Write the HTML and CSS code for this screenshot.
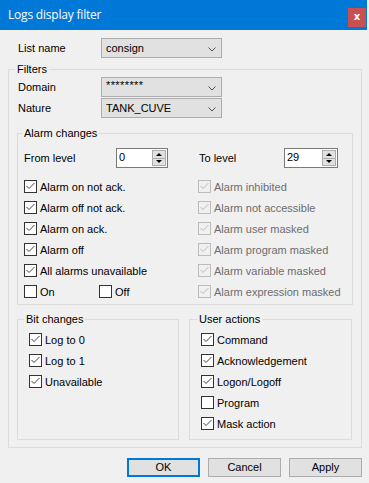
FILE: index.html
```html
<!DOCTYPE html>
<html>
<head>
<meta charset="utf-8">
<title>Logs display filter</title>
<link rel="stylesheet" href="styles.css">
</head>
<body>
<div class="window">
  <div class="titlebar">
    <span class="title">Logs display filter</span>
    <span class="close">x</span>
  </div>

  <div class="row top-row">
    <span class="label">List name</span>
    <div class="combo"><span>consign</span><svg class="chev" width="8" height="5" viewBox="0 0 8 5"><polyline points="0.5,0.5 4,4 7.5,0.5"/></svg></div>
  </div>

  <fieldset class="group filters">
    <legend>Filters</legend>
    <div class="row">
      <span class="label">Domain</span>
      <div class="combo"><span class="stars">********</span><svg class="chev" width="8" height="5" viewBox="0 0 8 5"><polyline points="0.5,0.5 4,4 7.5,0.5"/></svg></div>
    </div>
    <div class="row second">
      <span class="label">Nature</span>
      <div class="combo"><span>TANK_CUVE</span><svg class="chev" width="8" height="5" viewBox="0 0 8 5"><polyline points="0.5,0.5 4,4 7.5,0.5"/></svg></div>
    </div>

    <fieldset class="group alarms">
      <legend>Alarm changes</legend>
      <div class="levels">
        <div class="level">
          <span class="lvl-label from">From level</span>
          <div class="spin narrow"><span class="spin-val">0</span><div class="spin-btns"><span class="sb"><i class="up"></i></span><span class="sb"><i class="down"></i></span></div></div>
        </div>
        <div class="level">
          <span class="lvl-label to">To level</span>
          <div class="spin wide"><span class="spin-val">29</span><div class="spin-btns"><span class="sb"><i class="up"></i></span><span class="sb"><i class="down"></i></span></div></div>
        </div>
      </div>
      <div class="alarm-grid">
        <label class="chk"><span class="cb"><svg viewBox="0 0 11 11"><polyline points="1.5,5 4,7.5 9.5,2"/></svg></span>Alarm on not ack.</label>
        <label class="chk dis"><span class="cb"><svg viewBox="0 0 11 11"><polyline points="1.5,5 4,7.5 9.5,2"/></svg></span>Alarm inhibited</label>
        <label class="chk"><span class="cb"><svg viewBox="0 0 11 11"><polyline points="1.5,5 4,7.5 9.5,2"/></svg></span>Alarm off not ack.</label>
        <label class="chk dis"><span class="cb"><svg viewBox="0 0 11 11"><polyline points="1.5,5 4,7.5 9.5,2"/></svg></span>Alarm not accessible</label>
        <label class="chk"><span class="cb"><svg viewBox="0 0 11 11"><polyline points="1.5,5 4,7.5 9.5,2"/></svg></span>Alarm on ack.</label>
        <label class="chk dis"><span class="cb"><svg viewBox="0 0 11 11"><polyline points="1.5,5 4,7.5 9.5,2"/></svg></span>Alarm user masked</label>
        <label class="chk"><span class="cb"><svg viewBox="0 0 11 11"><polyline points="1.5,5 4,7.5 9.5,2"/></svg></span>Alarm off</label>
        <label class="chk dis"><span class="cb"><svg viewBox="0 0 11 11"><polyline points="1.5,5 4,7.5 9.5,2"/></svg></span>Alarm program masked</label>
        <label class="chk"><span class="cb"><svg viewBox="0 0 11 11"><polyline points="1.5,5 4,7.5 9.5,2"/></svg></span>All alarms unavailable</label>
        <label class="chk dis"><span class="cb"><svg viewBox="0 0 11 11"><polyline points="1.5,5 4,7.5 9.5,2"/></svg></span>Alarm variable masked</label>
        <div class="onoff">
          <label class="chk on"><span class="cb"></span>On</label>
          <label class="chk"><span class="cb"></span>Off</label>
        </div>
        <label class="chk dis"><span class="cb"><svg viewBox="0 0 11 11"><polyline points="1.5,5 4,7.5 9.5,2"/></svg></span>Alarm expression masked</label>
      </div>
    </fieldset>

    <div class="bottom-groups">
      <fieldset class="group bits">
        <legend>Bit changes</legend>
        <label class="chk"><span class="cb"><svg viewBox="0 0 11 11"><polyline points="1.5,5 4,7.5 9.5,2"/></svg></span>Log to 0</label>
        <label class="chk"><span class="cb"><svg viewBox="0 0 11 11"><polyline points="1.5,5 4,7.5 9.5,2"/></svg></span>Log to 1</label>
        <label class="chk"><span class="cb"><svg viewBox="0 0 11 11"><polyline points="1.5,5 4,7.5 9.5,2"/></svg></span>Unavailable</label>
      </fieldset>
      <fieldset class="group users">
        <legend>User actions</legend>
        <label class="chk"><span class="cb"><svg viewBox="0 0 11 11"><polyline points="1.5,5 4,7.5 9.5,2"/></svg></span>Command</label>
        <label class="chk"><span class="cb"><svg viewBox="0 0 11 11"><polyline points="1.5,5 4,7.5 9.5,2"/></svg></span>Acknowledgement</label>
        <label class="chk"><span class="cb"><svg viewBox="0 0 11 11"><polyline points="1.5,5 4,7.5 9.5,2"/></svg></span>Logon/Logoff</label>
        <label class="chk"><span class="cb"></span>Program</label>
        <label class="chk"><span class="cb"><svg viewBox="0 0 11 11"><polyline points="1.5,5 4,7.5 9.5,2"/></svg></span>Mask action</label>
      </fieldset>
    </div>
  </fieldset>

  <div class="buttons">
    <span class="btn default">OK</span>
    <span class="btn">Cancel</span>
    <span class="btn">Apply</span>
  </div>
</div>
</body>
</html>
```

FILE: styles.css
```css
* { box-sizing: border-box; }

body {
  margin: 0;
  background: #f0f0f0;
  font-family: "Liberation Sans", Arial, sans-serif;
  font-size: 11px;
  color: #000;
}

.window {
  width: 369px;
  height: 483px;
  background: #f0f0f0;
  overflow: hidden;
}

.titlebar {
  height: 30px;
  margin-right: 2px;
  background: #0078d7;
  display: flex;
  align-items: flex-start;
}

.title {
  margin: 7px 0 0 8px;
  font-family: "Open Sans", "Noto Sans", sans-serif;
  font-size: 12px;
  line-height: 16px;
  color: #fff;
  letter-spacing: -0.2px;
}

.close {
  margin: 8px 1px 0 auto;
  width: 18px;
  height: 19px;
  background: #c75050;
  color: #fff;
  font-family: "DejaVu Sans", sans-serif;
  font-weight: bold;
  font-size: 10px;
  line-height: 18px;
  text-align: center;
}

.row {
  display: flex;
  align-items: center;
  height: 20px;
}

.row .label {
  width: 84px;
  padding-left: 1px;
}

.top-row {
  margin-top: 8px;
  padding-left: 17px;
}

.row.second { margin-top: 1px; }

.combo {
  width: 121px;
  height: 20px;
  background: #e1e1e1;
  border: 1px solid #adadad;
  display: flex;
  align-items: center;
  justify-content: space-between;
  padding: 0 5px 0 4px;
}

.stars {
  font-size: 11px;
  letter-spacing: 0.4px;
  line-height: 11px;
  margin-top: -3px;
}

.chev {
  margin-top: 2px;
  fill: none;
  stroke: #505050;
  stroke-width: 1;
}

/* group boxes */
.group {
  margin: 0;
  min-width: 0;
  border: 1px solid #dcdcdc;
}

.group legend {
  font-size: 11px;
  line-height: 12px;
  padding: 0 2px;
}

.filters {
  width: 354px;
  margin: 5px 0 0 8px;
  padding: 2px 8px 7px 8px;
}

.filters > legend { margin-left: -2px; }

.alarms {
  margin-top: 9px;
  padding: 9px 6px 2px 6px;
}

.alarms > legend { margin-left: -2px; }

.levels {
  display: grid;
  grid-template-columns: 174px 1fr;
  height: 20px;
}

.level {
  display: flex;
  align-items: center;
}

.lvl-label.from { width: 92px; }
.lvl-label.to { width: 86px; padding-left: 1px; }

.spin {
  height: 20px;
  background: #fff;
  border: 1px solid #7a7a7a;
  display: flex;
  align-items: stretch;
}

.spin.narrow { width: 52px; }
.spin.wide { width: 54px; }

.spin-val {
  flex: 1;
  padding-left: 2px;
  line-height: 17px;
}

.spin-btns {
  width: 14px;
  margin: 1px;
  display: flex;
  flex-direction: column;
}

.sb {
  flex: 1;
  background: #e1e1e1;
  border: 1px solid #adadad;
  display: flex;
  align-items: center;
  justify-content: center;
}

.sb + .sb { border-top: 0; }

.sb i {
  width: 0;
  height: 0;
  border-left: 3px solid transparent;
  border-right: 3px solid transparent;
}

.sb i.up { border-bottom: 3px solid #000; }
.sb i.down { border-top: 3px solid #000; }

.alarm-grid {
  margin-top: 8px;
  display: grid;
  grid-template-columns: 174px 1fr;
  grid-auto-rows: 21px;
}

.onoff {
  display: flex;
}

.onoff .on { width: 75px; }

/* checkboxes */
.chk {
  display: flex;
  align-items: center;
  height: 21px;
  gap: 3px;
  white-space: nowrap;
}

.cb {
  width: 13px;
  height: 13px;
  flex: none;
  background: #fff;
  border: 1px solid #333;
  display: flex;
}

.cb svg {
  width: 11px;
  height: 11px;
  fill: none;
  stroke: #444;
  stroke-width: 1;
}

.chk.dis { color: #6d6d6d; }
.chk.dis .cb { border-color: #bcbcbc; background: #f0f0f0; }
.chk.dis .cb svg { stroke: #bcbcbc; }

.bottom-groups {
  margin-top: 8px;
  display: grid;
  grid-template-columns: 162px 163px;
  column-gap: 10px;
}

.bits, .users {
  padding: 4px 6px 5px 11px;
}

.bits > legend { margin-left: -5px; }
.users > legend { margin-left: -4px; }

.buttons {
  margin-top: 10px;
  padding-right: 7px;
  display: flex;
  justify-content: flex-end;
  gap: 8px;
}

.btn {
  width: 73px;
  height: 19px;
  background: #e1e1e1;
  border: 1px solid #adadad;
  text-align: center;
  line-height: 17px;
}

.btn.default {
  border: 2px solid #0078d7;
  line-height: 15px;
}
```
